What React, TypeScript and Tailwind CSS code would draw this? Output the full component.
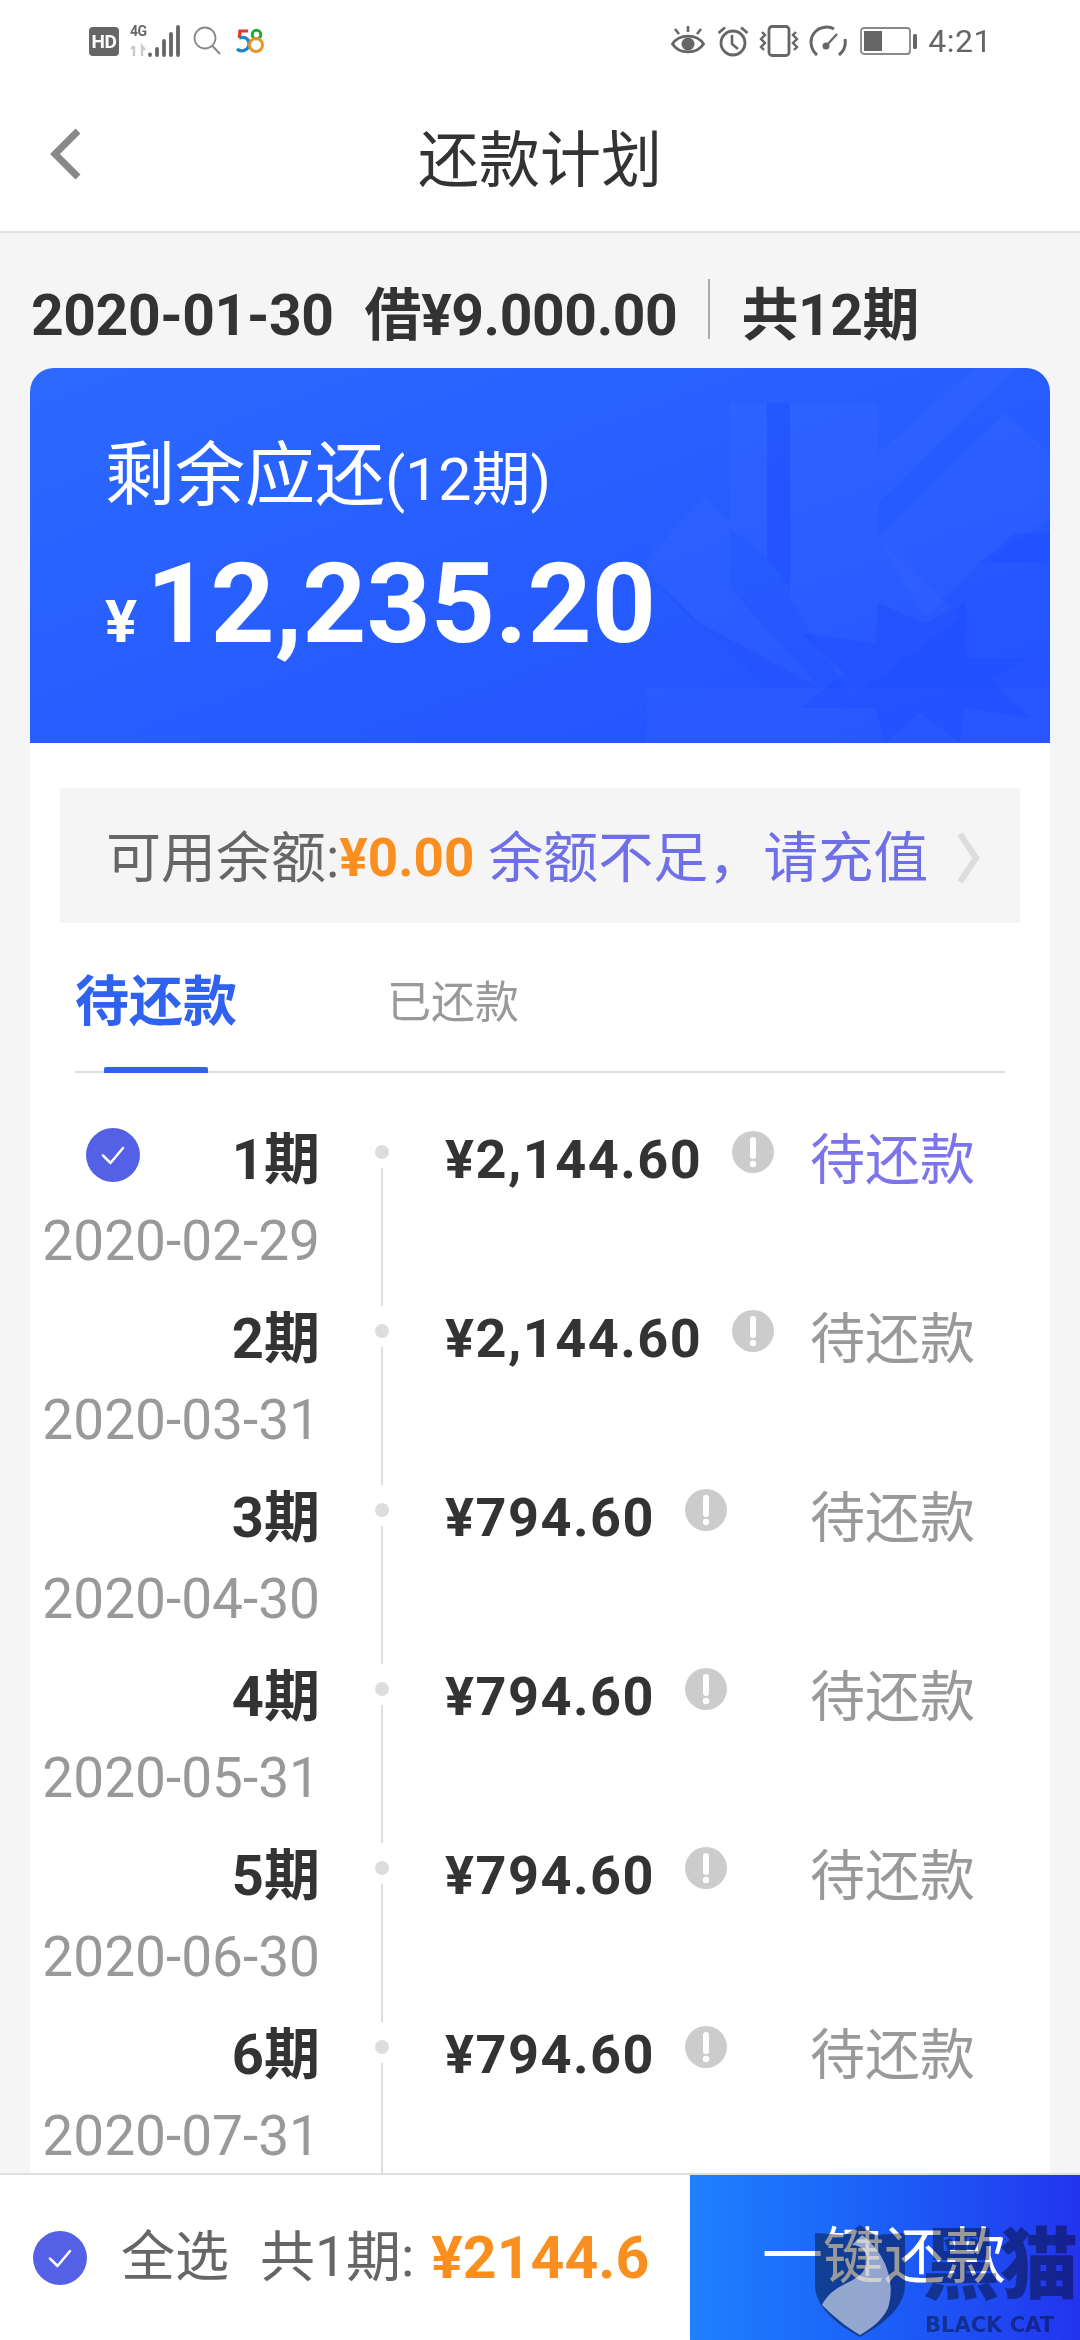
import React from "react";

const rows = [
  { n: "1期", date: "2020-02-29", amt: "¥2,144.60", active: true },
  { n: "2期", date: "2020-03-31", amt: "¥2,144.60" },
  { n: "3期", date: "2020-04-30", amt: "¥794.60" },
  { n: "4期", date: "2020-05-31", amt: "¥794.60" },
  { n: "5期", date: "2020-06-30", amt: "¥794.60" },
  { n: "6期", date: "2020-07-31", amt: "¥794.60" },
];

function Check() {
  return (
    <svg width="54" height="54" viewBox="0 0 54 54" className="shrink-0">
      <circle cx="27" cy="27" r="27" fill="#5460e6" />
      <path d="M17 27.5 L24.5 35 L37 20" fill="none" stroke="#fff" strokeWidth="2.5" strokeLinecap="round" strokeLinejoin="round" />
    </svg>
  );
}

function Warn() {
  return (
    <svg width="42" height="42" viewBox="0 0 42 42" className="shrink-0">
      <circle cx="21" cy="21" r="21" fill="#cccccc" />
      <path d="M21 9 V25" stroke="#fff" strokeWidth="6" strokeLinecap="round" />
      <circle cx="21" cy="33" r="3.2" fill="#fff" />
    </svg>
  );
}

function StatusLeft() {
  return (
    <div className="flex items-center">
      <div className="w-[30px] h-[29px] rounded-[4px] bg-[#666] text-white text-[19px] font-bold leading-[29px] text-center tracking-[-0.5px]">HD</div>
      <div className="relative w-[52px] h-[32px] ml-[11px]">
        <span className="absolute left-0 top-[-2px] text-[#666] text-[14px] font-bold leading-[16px] tracking-[-0.5px]">4G</span>
        <svg width="52" height="32" viewBox="0 0 52 32" className="absolute left-0 top-0">
          <path d="M4 21V31M1 24L4 21M12 31V21L15 25" stroke="#ccc" strokeWidth="2.4" fill="none" />
          <g stroke="#666" strokeWidth="3.8" strokeLinecap="round">
            <path d="M20 29.5V30" />
            <path d="M27 24V30" />
            <path d="M34 16V30" />
            <path d="M41 9V30" />
            <path d="M48 2V30" />
          </g>
        </svg>
      </div>
      <svg width="28" height="30" viewBox="0 0 28 30" className="ml-[11px]">
        <circle cx="12" cy="12" r="10.5" fill="none" stroke="#888" strokeWidth="1.8" />
        <path d="M19.5 20 L27 28" stroke="#888" strokeWidth="2" />
      </svg>
      <svg width="28" height="26" viewBox="0 0 28 26" className="ml-[15px]">
        <path d="M12 3H4L3.3 10" fill="none" stroke="#e8352b" strokeWidth="3.2" />
        <path d="M3.3 10C9 8 13 11 13 16C13 22 5 25 1 21" fill="none" stroke="#1a86c8" strokeWidth="3.2" />
        <circle cx="20.5" cy="6.5" r="4.3" fill="none" stroke="#25a83a" strokeWidth="3" />
        <circle cx="20" cy="17" r="6.5" fill="none" stroke="#e8962b" strokeWidth="3" />
      </svg>
    </div>
  );
}

function StatusRight() {
  return (
    <div className="flex items-center">
      <svg width="34" height="32" viewBox="0 0 34 32">
        <path d="M1.5 19C8 8.5 26 8.5 32.5 19C26 29.5 8 29.5 1.5 19Z" fill="none" stroke="#666" strokeWidth="2.8" />
        <circle cx="17" cy="19" r="6.5" fill="#666" />
        <path d="M17 1V7M4 4L8 9M30 4L26 9" stroke="#666" strokeWidth="2.6" />
      </svg>
      <svg width="32" height="32" viewBox="0 0 32 32" className="ml-[12px]">
        <circle cx="16" cy="18" r="12" fill="none" stroke="#666" strokeWidth="2.8" />
        <path d="M15 10V19L21 24" fill="none" stroke="#666" strokeWidth="2.6" />
        <path d="M1.5 8L8 2.5M30.5 8L24 2.5" stroke="#666" strokeWidth="2.8" />
      </svg>
      <svg width="40" height="32" viewBox="0 0 40 32" className="ml-[10px]">
        <rect x="10" y="1.5" width="20" height="29" rx="3" fill="none" stroke="#666" strokeWidth="2.8" />
        <path d="M3 7L6 10L2 14L6 18L2 22L5 25M37 7L34 10L38 14L34 18L38 22L35 25" fill="none" stroke="#666" strokeWidth="2.4" />
      </svg>
      <svg width="38" height="32" viewBox="0 0 38 32" className="ml-[10px]">
        <path d="M8 30C1 24 -0.5 13 7 6C12 1.5 20 1 25 4" fill="none" stroke="#666" strokeWidth="3" />
        <path d="M30 30C35 26 37 20 36 14" fill="none" stroke="#666" strokeWidth="3" />
        <path d="M17 21L28 9" stroke="#666" strokeWidth="2.2" />
        <circle cx="17" cy="21" r="3.5" fill="#666" />
      </svg>
      <svg width="58" height="28" viewBox="0 0 58 28" className="ml-[13px]">
        <rect x="1" y="1" width="49" height="26" rx="3" fill="none" stroke="#888" strokeWidth="1.8" />
        <rect x="4" y="4" width="18" height="20" fill="#666" />
        <rect x="53" y="7" width="4" height="15" rx="1.5" fill="#666" />
      </svg>
      <span className="ml-[10px] text-[32px] leading-none text-[#666] tracking-[0.5px]">4:21</span>
    </div>
  );
}

function CardPattern() {
  return (
    <svg viewBox="0 0 1020 375" className="absolute inset-0 w-full h-full" preserveAspectRatio="none">
      <g fill="#ffffff" fillOpacity="0.022">
        <polygon points="700,35 737,35 737,190 700,160" />
        <polygon points="760,35 848,35 848,170 930,250 820,330 760,230" />
        <polygon points="848,85 945,0 985,0 848,135" />
        <polygon points="848,170 975,45 1020,85 1020,150 945,200 895,250" />
        <polygon points="675,130 617,189 617,205 737,320 790,320 700,220 700,155" />
        <polygon points="617,320 1020,320 1020,375 617,375" />
      </g>
      <g fill="#1f4cff" fillOpacity="0.4">
        <polygon points="737,35 760,35 760,220 737,190" />
        <polygon points="848,235 895,255 935,235 935,290 1000,290 960,310 1000,350 935,340 930,375 890,345 855,375 845,340 770,340 815,305 770,265 845,275" />
        <polygon points="1020,165 1020,195 950,195 985,165" />
        <polygon points="617,205 660,250 790,320 737,320" />
      </g>
    </svg>
  );
}

function Row({ n, date, amt, active }: { n: string; date: string; amt: string; active?: boolean }) {
  return (
    <div className="flex h-[179px] shrink-0">
      <div className="w-[290px] shrink-0 flex flex-col">
        <div className="h-[72px] flex items-center justify-between pl-[56px]">
          {active ? <div className="-mt-[10px]"><Check /></div> : <div />}
          <span className="text-[56px] font-bold text-[#333] leading-none">{n}</span>
        </div>
        <div className="mt-[9px] h-[72px] text-right text-[55px] text-[#999] leading-[72px] whitespace-nowrap">{date}</div>
      </div>
      <div className="w-[16px] ml-[54px] shrink-0 flex flex-col items-center pt-[21px]">
        <div className="w-[14px] h-[14px] rounded-full bg-[#dddddd] shrink-0" />
        <div className="w-[2px] flex-1 bg-[#dddddd] mt-[9px] mb-[-3px]" />
      </div>
      <div className="flex-1 ml-[55px] h-[72px] flex items-center">
        <span className="text-[54px] font-bold text-[#333] leading-none tracking-[1.5px]">{amt}</span>
        <div className="ml-[30px] -mt-[16px]"><Warn /></div>
      </div>
      <div className={`w-[240px] shrink-0 h-[72px] text-[55px] leading-[72px] ${active ? "text-[#7b74ea]" : "text-[#999]"}`}>待还款</div>
    </div>
  );
}

export default function App() {
  return (
    <div className="w-[1080px] h-[2340px] overflow-hidden flex flex-col bg-[#f5f5f5] font-['Roboto','Noto_Sans_CJK_SC',sans-serif]">
      <header className="bg-white h-[233px] shrink-0 border-b-2 border-[#e0e0e0] flex flex-col">
        <div className="h-[82px] pl-[89px] pr-[88px] flex items-center justify-between">
          <StatusLeft />
          <StatusRight />
        </div>
        <div className="relative flex-1 flex items-center justify-center">
          <svg width="36" height="54" viewBox="0 0 36 54" className="absolute left-[47px] top-[45px]">
            <path d="M31 4 L8 27 L31 50" fill="none" stroke="#888" strokeWidth="7" />
          </svg>
          <span className="text-[61px] text-[#333] leading-none mt-[10px]">还款计划</span>
        </div>
      </header>

      <div className="h-[135px] shrink-0 pl-[31px] pt-[30px] flex items-center text-[57px] font-bold text-[#333] leading-none whitespace-nowrap tracking-[-0.4px]">
        <span>2020-01-30</span>
        <span className="ml-[31px]">借¥9.000.00</span>
        <span className="ml-[31px] w-[2px] h-[60px] bg-[#aaaaaa] -mt-[14px]" />
        <span className="ml-[31px]">共12期</span>
      </div>

      <main className="mx-[30px] flex-1 min-h-0 flex flex-col">
        <section className="relative h-[375px] shrink-0 rounded-t-[24px] overflow-hidden bg-gradient-to-br from-[#2c69ff] to-[#2351ff] text-white">
          <CardPattern />
          <div className="relative pl-[75px] pt-[72px]">
            <div className="flex items-baseline h-[72px] leading-[72px]">
              <span className="text-[70px]">剩余应还</span>
              <span className="text-[59px]">(12期)</span>
            </div>
            <div className="flex items-baseline mt-[36px] font-bold leading-none">
              <span className="text-[60px]">¥</span>
              <span className="text-[112px] ml-[9px]">12,235.20</span>
            </div>
          </div>
        </section>

        <div className="flex-1 min-h-0 bg-white flex flex-col">
          <div className="mx-[30px] mt-[45px] h-[135px] shrink-0 bg-[#f5f5f5] pl-[46px] pt-[5px] flex items-center text-[55px] leading-none whitespace-nowrap relative">
            <span className="text-[#666]">可用余额:</span>
            <span className="text-[#fa8e1e] font-bold text-[53px]">¥0.00</span>
            <span className="text-[#6f6fe8] ml-[14px]">余额不足，请充值</span>
            <svg width="26" height="54" viewBox="0 0 26 54" className="absolute left-[895px] top-[43px]">
              <path d="M5 3 L21 27 L5 51" fill="none" stroke="#dddddd" strokeWidth="6" />
            </svg>
          </div>

          <div className="mx-[45px] mt-[30px] h-[120px] shrink-0 border-b-2 border-[#dddddd] flex items-center relative">
            <span className="text-[54px] font-bold text-[#2f62ee] leading-none -mt-[18px]">待还款</span>
            <span className="text-[44px] text-[#999] leading-none ml-[150px] -mt-[18px]">已还款</span>
            <div className="absolute left-[29px] bottom-[-2px] w-[104px] h-[6px] rounded-t-[2px] bg-[#2f62ee]" />
          </div>

          <div className="flex-1 min-h-0 overflow-hidden flex flex-col pt-[51px]">
            {rows.map((r) => (
              <Row key={r.n + r.date} {...r} />
            ))}
          </div>
        </div>
      </main>

      <footer className="h-[167px] shrink-0 bg-white border-t-2 border-[#e0e0e0] flex relative">
        <div className="flex-1 flex items-center pl-[33px] whitespace-nowrap leading-none">
          <Check />
          <span className="ml-[34px] text-[54px] text-[#666]">全选</span>
          <span className="ml-[31px] text-[55px] text-[#666]">共1期:</span>
          <span className="ml-[17px] text-[59px] font-bold text-[#fa8e1e]">¥2144.6</span>
        </div>
        <div className="w-[390px] shrink-0 bg-gradient-to-r from-[#2080ff] to-[#2233ee] text-white text-[61px] leading-none flex items-center pl-[72px]">
          一键还款
        </div>
        <svg width="100" height="116" viewBox="0 0 100 116" className="absolute left-[810px] top-[48px] mix-blend-multiply">
          <path d="M50 2 L65 12 L95 10 V62 C95 85 72 102 50 114 C28 102 5 85 5 62 V10 L35 12 Z" fill="#999999" />
        </svg>
        <svg width="100" height="116" viewBox="0 0 100 116" className="absolute left-[810px] top-[48px]">
          <path d="M52 12 C76 30 86 60 78 85 C72 98 60 106 50 112 C36 104 22 92 12 82 C22 62 40 62 52 50 C62 38 56 22 42 22 Z" fill="#ffffff" fillOpacity="0.55" />
        </svg>
        <div className="absolute left-[922px] top-[53px] text-[78px] font-black text-[#999] leading-none mix-blend-multiply whitespace-nowrap">黑猫</div>
        <div className="absolute left-[925px] top-[140px] text-[21px] font-bold text-[#999] leading-none mix-blend-multiply whitespace-nowrap font-['DejaVu_Sans']">BLACK CAT</div>
      </footer>
    </div>
  );
}
